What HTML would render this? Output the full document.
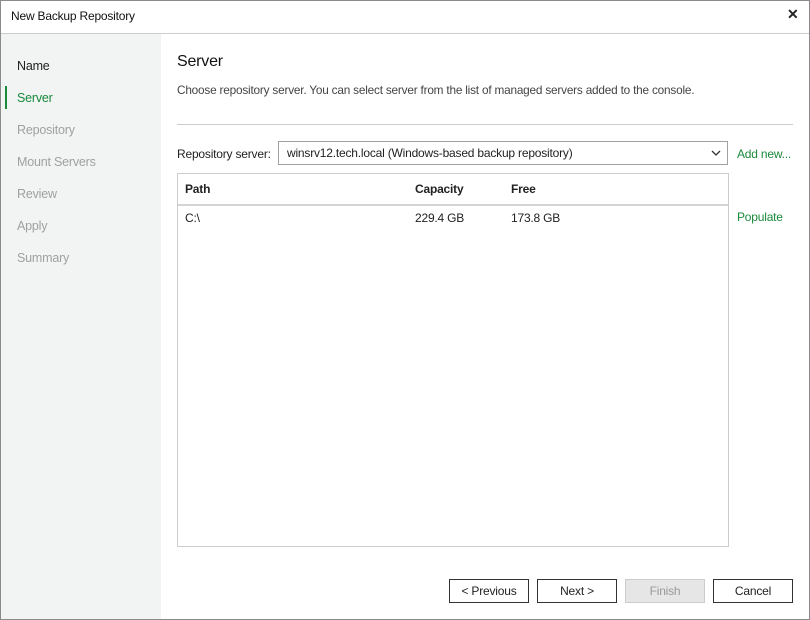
<!DOCTYPE html>
<html><head><style>
*{box-sizing:border-box;margin:0;padding:0}
body{width:810px;height:620px;position:relative;font-family:"Liberation Sans",sans-serif;font-size:12px;letter-spacing:-0.2px;color:#222;background:#fff;overflow:hidden}
.frame{position:absolute;left:0;top:0;width:810px;height:620px;border:1px solid #8a8a8a}
.title{position:absolute;left:11px;top:9px;font-size:12px;color:#111}
.close{position:absolute;left:787px;top:6px;font-size:14px;font-weight:bold}
.hline{position:absolute;left:1px;top:33px;width:808px;height:1px;background:#ccc}
.side{position:absolute;left:1px;top:34px;width:160px;height:585px;background:#f2f3f3}
.nav{position:absolute;left:17px;font-size:12.5px;color:#a0a0a0}
.bar{position:absolute;left:5px;top:86px;width:2px;height:23px;background:#1a8a3c}
.abs{position:absolute}
.btn{position:absolute;top:579px;height:24px;border:1px solid #333;background:#fff;text-align:center;line-height:22px;font-size:12px}
</style></head><body>
<div class="frame"></div>
<div class="title">New Backup Repository</div>
<div class="close">✕</div>
<div class="hline"></div>
<div class="side"></div>
<div class="bar"></div>
<div class="nav" style="top:59px;color:#222">Name</div>
<div class="nav" style="top:91px;color:#1a8a3c">Server</div>
<div class="nav" style="top:123px">Repository</div>
<div class="nav" style="top:155px">Mount Servers</div>
<div class="nav" style="top:187px">Review</div>
<div class="nav" style="top:219px">Apply</div>
<div class="nav" style="top:251px">Summary</div>
<div class="abs" style="left:177px;top:53px;font-size:16px;color:#111">Server</div>
<div class="abs" style="left:177px;top:83px;color:#444;font-size:11.8px">Choose repository server. You can select server from the list of managed servers added to the console.</div>
<div class="abs" style="left:177px;top:124px;width:616px;height:1px;background:#ccc"></div>
<div class="abs" style="left:177px;top:147px">Repository server:</div>
<div class="abs" style="left:278px;top:141px;width:450px;height:24px;border:1px solid #a0a0a0;padding:4px 8px">winsrv12.tech.local (Windows-based backup repository)</div>
<svg class="abs" style="left:711px;top:150px" width="10" height="6"><path d="M1 1 L5 5 L9 1" stroke="#333" stroke-width="1.3" fill="none"/></svg>
<div class="abs" style="left:737px;top:147px;color:#1a8a3c">Add new...</div>
<div class="abs" style="left:177px;top:173px;width:552px;height:374px;border:1px solid #ccc"></div>
<div class="abs" style="left:178px;top:204px;width:550px;height:2px;background:#d4d4d4"></div>
<div class="abs" style="left:185px;top:182px;font-weight:bold">Path</div>
<div class="abs" style="left:415px;top:182px;font-weight:bold">Capacity</div>
<div class="abs" style="left:511px;top:182px;font-weight:bold">Free</div>
<div class="abs" style="left:185px;top:211px">C:\</div>
<div class="abs" style="left:415px;top:211px">229.4 GB</div>
<div class="abs" style="left:511px;top:211px">173.8 GB</div>
<div class="abs" style="left:737px;top:210px;color:#1a8a3c">Populate</div>
<div class="btn" style="left:449px;width:80px">&lt; Previous</div>
<div class="btn" style="left:537px;width:80px">Next &gt;</div>
<div class="btn" style="left:625px;width:80px;border-color:#ccc;background:#e6e6e6;color:#999">Finish</div>
<div class="btn" style="left:713px;width:80px">Cancel</div>
</body></html>
